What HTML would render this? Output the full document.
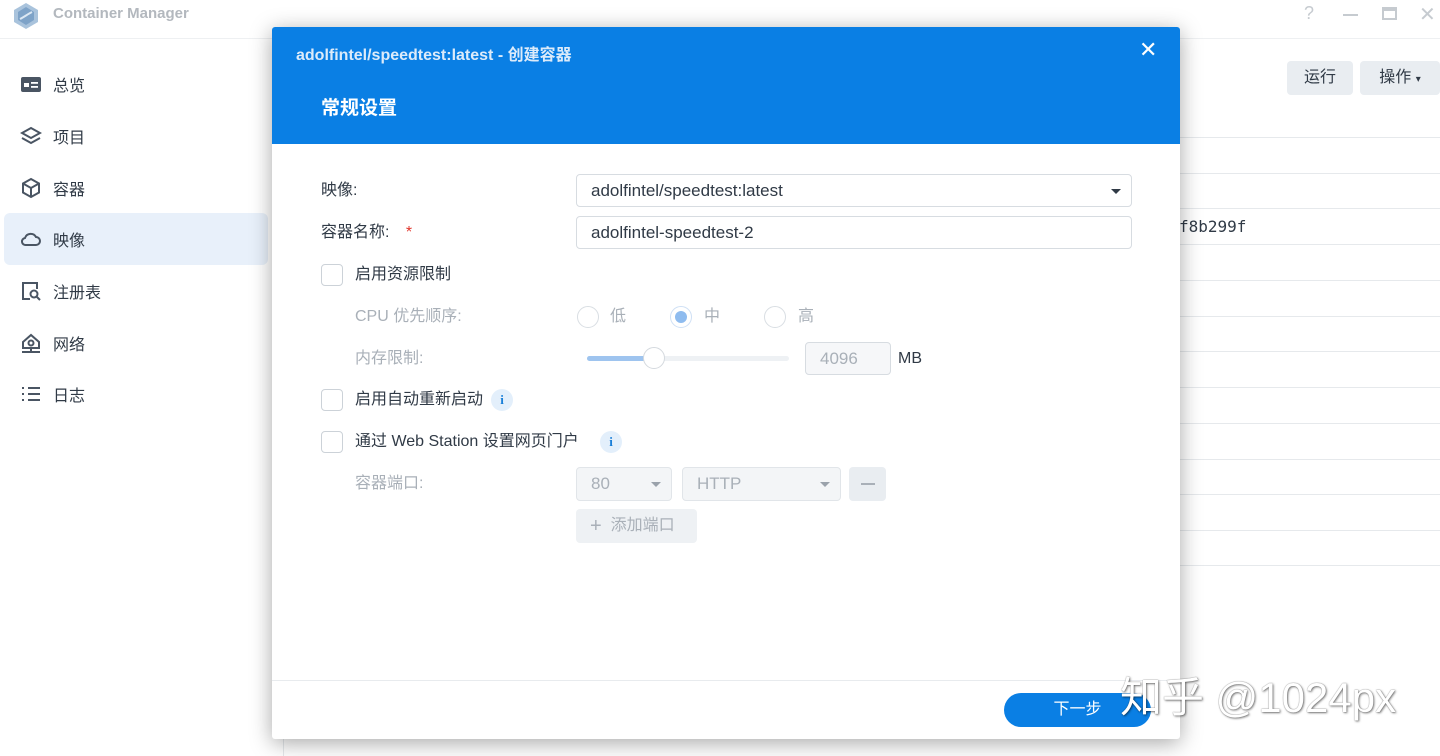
<!DOCTYPE html>
<html><head><meta charset="utf-8"><style>
*{box-sizing:border-box;margin:0;padding:0}
body{width:1440px;height:756px;overflow:hidden;background:#fff;font-family:"Liberation Sans","Noto Sans CJK SC",sans-serif;color:#303a46;position:relative}
.abs{position:absolute}
.top{left:0;top:0;width:1440px;height:39px;border-bottom:1px solid #eef0f2}
.title{left:53px;top:5px;font-size:15px;font-weight:bold;color:#b3b8be}
.nav{left:20px;font-size:16px;color:#303a46;display:flex;align-items:center}
.nav svg{width:22px;height:22px;margin-right:11px}
.sel{left:4px;top:213px;width:264px;height:52px;background:#e8f0fa;border-radius:6px}
.row{left:1180px;width:260px;height:1px;background:#e6e9ec}
.btn{top:61px;height:34px;background:#e9edf1;border-radius:4px;font-size:16px;color:#303a46;text-align:center;line-height:34px}
.modal{left:272px;top:27px;width:908px;height:712px;background:#fff;border-radius:3px;box-shadow:0 4px 22px rgba(0,0,0,.35);overflow:hidden}
.hd{left:0;top:0;width:908px;height:117px;background:#0a7fe4}
.lbl{font-size:16px;line-height:20px;color:#303a46}
.dim{color:#a9b0b8}
.inp{height:33px;border:1px solid #d7dce1;border-radius:4px;font-size:17px;line-height:31px;padding-left:14px}
.cb{width:22px;height:22px;border:1px solid #ccd2d8;border-radius:4px;background:#fff}
.radio{width:22px;height:22px;border:1px solid #d9dee3;border-radius:50%}
.info{width:22px;height:22px;border-radius:50%;background:#e3effb;color:#1a7fd8;font-size:13px;font-weight:bold;text-align:center;line-height:22px;font-family:"Liberation Serif",serif}
.sel2{height:34px;border:1px solid #e1e5e9;border-radius:4px;background:#f3f5f7;color:#a9b0b8;font-size:17px;line-height:32px;padding-left:14px}
.caret{position:absolute;right:10px;top:14px;border-left:5px solid transparent;border-right:5px solid transparent;border-top:5px solid #9aa2ab}
</style></head><body>
<div class="abs top"></div>
<svg class="abs" style="left:12px;top:2px" width="28" height="28" viewBox="0 0 28 28"><path d="M14 1L26 8V20L14 27L2 20V8Z" fill="#a9c3dc"/><path d="M14 5L22 10V18L14 23L6 18V10Z" fill="#7ea3c8"/><path d="M8 17C12 15 16 12 20 10" stroke="#dce8f3" stroke-width="2" fill="none"/></svg>
<div class="abs title">Container Manager</div>
<div class="abs" style="left:1304px;top:3px;font-size:18px;color:#c6cbd0">?</div>
<div class="abs" style="left:1343px;top:14px;width:15px;height:2px;background:#c6cbd0"></div>
<div class="abs" style="left:1382px;top:7px;width:15px;height:13px;border:2px solid #c6cbd0;border-top-width:4px"></div>
<div class="abs" style="left:1419px;top:2px;font-size:20px;color:#c6cbd0">✕</div>

<div class="abs sel"></div>
<div class="abs nav" style="top:72px"><svg viewBox="0 0 22 22"><rect x="1" y="4" width="20" height="15" rx="2" fill="#4a5563"/><rect x="4" y="10" width="5" height="4" fill="#fff"/><rect x="11" y="9" width="7" height="1.8" fill="#fff"/><rect x="11" y="13" width="7" height="1.8" fill="#fff"/></svg>总览</div>
<div class="abs nav" style="top:124px"><svg viewBox="0 0 22 22" fill="none" stroke="#4a5563" stroke-width="2"><path d="M11 3L20 8L11 13L2 8Z"/><path d="M2 13L11 18L20 13"/></svg>项目</div>
<div class="abs nav" style="top:176px"><svg viewBox="0 0 22 22" fill="none" stroke="#4a5563" stroke-width="2"><path d="M11 2L19 6.5V15.5L11 20L3 15.5V6.5Z"/><path d="M3 6.5L11 11L19 6.5M11 11V20"/></svg>容器</div>
<div class="abs nav" style="top:227px"><svg viewBox="0 0 22 22" fill="none" stroke="#4a5563" stroke-width="2"><path d="M6 17H16A4 4 0 0 0 16 9A6 6 0 0 0 5 10A3.5 3.5 0 0 0 6 17Z"/></svg>映像</div>
<div class="abs nav" style="top:279px"><svg viewBox="0 0 22 22" fill="none" stroke="#4a5563" stroke-width="2"><path d="M10 19H3V3H17V9"/><circle cx="14" cy="14" r="3.5"/><path d="M16.5 16.5L20 20"/></svg>注册表</div>
<div class="abs nav" style="top:331px"><svg viewBox="0 0 22 22" fill="none" stroke="#4a5563" stroke-width="2"><path d="M3 10L11 3L19 10V16H3Z"/><circle cx="11" cy="11" r="2.5"/><path d="M2 20H20M11 16V20"/></svg>网络</div>
<div class="abs nav" style="top:382px"><svg viewBox="0 0 22 22" stroke="#4a5563" stroke-width="2"><path d="M2 5H4M8 5H20M2 11H4M8 11H20M2 17H4M8 17H20"/></svg>日志</div>
<div class="abs" style="left:283px;top:39px;width:1px;height:717px;background:#e6e9ec"></div>

<div class="abs btn" style="left:1287px;width:66px">运行</div>
<div class="abs btn" style="left:1360px;width:80px">操作 <span style="font-size:10px">▾</span></div>
<div class="abs row" style="top:137px"></div><div class="abs row" style="top:173px"></div><div class="abs row" style="top:208px"></div><div class="abs row" style="top:244px"></div><div class="abs row" style="top:280px"></div><div class="abs row" style="top:316px"></div><div class="abs row" style="top:351px"></div><div class="abs row" style="top:387px"></div><div class="abs row" style="top:423px"></div><div class="abs row" style="top:459px"></div><div class="abs row" style="top:494px"></div><div class="abs row" style="top:530px"></div><div class="abs row" style="top:565px"></div>
<div class="abs" style="left:1179px;top:217px;font-size:16px;font-family:'DejaVu Sans Mono',monospace;color:#303a46">f8b299f</div>

<div class="abs modal">
 <div class="abs hd"></div>
 <div class="abs" style="left:24px;top:14px;font-size:16px;font-weight:bold;color:#dcebfa">adolfintel/speedtest:latest - 创建容器</div>
 <div class="abs" style="left:867px;top:10px;font-size:22px;color:#fff">✕</div>
 <div class="abs" style="left:49px;top:66px;font-size:19px;font-weight:bold;color:#fff">常规设置</div>

 <div class="abs lbl" style="left:49px;top:154px">映像:</div>
 <div class="abs inp" style="left:304px;top:147px;width:556px">adolfintel/speedtest:latest<span class="caret" style="top:14px;border-top-color:#303a46"></span></div>
 <div class="abs lbl" style="left:49px;top:196px">容器名称: <span style="color:#e0362c;margin-left:12px">*</span></div>
 <div class="abs inp" style="left:304px;top:189px;width:556px">adolfintel-speedtest-2</div>

 <div class="abs cb" style="left:49px;top:237px"></div>
 <div class="abs lbl" style="left:83px;top:238px">启用资源限制</div>
 <div class="abs lbl dim" style="left:83px;top:280px">CPU 优先顺序:</div>
 <div class="abs radio" style="left:305px;top:279px"></div><div class="abs lbl dim" style="left:338px;top:280px">低</div>
 <div class="abs radio" style="left:398px;top:279px;border-color:#cfe0f5"><div style="margin:4px;width:12px;height:12px;border-radius:50%;background:#8fbcef"></div></div><div class="abs lbl dim" style="left:432px;top:280px">中</div>
 <div class="abs radio" style="left:492px;top:279px"></div><div class="abs lbl dim" style="left:526px;top:280px">高</div>
 <div class="abs lbl dim" style="left:83px;top:322px">内存限制:</div>
 <div class="abs" style="left:315px;top:329px;width:202px;height:5px;border-radius:3px;background:#eef1f4"></div>
 <div class="abs" style="left:315px;top:329px;width:68px;height:5px;border-radius:3px;background:#9ec4ef"></div>
 <div class="abs" style="left:371px;top:320px;width:22px;height:22px;border-radius:50%;background:#fff;border:1px solid #d4d9de"></div>
 <div class="abs inp dim" style="left:533px;top:315px;width:86px;background:#f6f7f9">4096</div>
 <div class="abs lbl" style="left:626px;top:322px">MB</div>

 <div class="abs cb" style="left:49px;top:362px"></div>
 <div class="abs lbl" style="left:83px;top:363px">启用自动重新启动</div>
 <div class="abs info" style="left:219px;top:362px">i</div>
 <div class="abs cb" style="left:49px;top:404px"></div>
 <div class="abs lbl" style="left:83px;top:405px">通过 Web Station 设置网页门户</div>
 <div class="abs info" style="left:328px;top:404px">i</div>

 <div class="abs lbl dim" style="left:83px;top:447px">容器端口:</div>
 <div class="abs sel2" style="left:304px;top:440px;width:96px">80<span class="caret"></span></div>
 <div class="abs sel2" style="left:410px;top:440px;width:159px">HTTP<span class="caret"></span></div>
 <div class="abs" style="left:577px;top:440px;width:37px;height:34px;background:#e9edf1;border-radius:4px"><div style="margin:16px auto 0;width:14px;height:2px;background:#a9b0b8"></div></div>
 <div class="abs" style="left:304px;top:482px;width:121px;height:34px;background:#eef1f4;border-radius:4px;color:#a9b0b8;font-size:16px;line-height:34px;padding-left:14px"><span style="font-size:20px;vertical-align:-2px">+</span>&nbsp; 添加端口</div>

 <div class="abs" style="left:0;top:653px;width:908px;height:1px;background:#e8ebee"></div>
 <div class="abs" style="left:732px;top:666px;width:147px;height:34px;background:#0a7fe4;border-radius:17px;color:#fff;font-size:16px;text-align:center;line-height:34px">下一步</div>
</div>
<div class="abs" style="left:1120px;top:664px;font-size:42px;color:#fff;text-shadow:1px 1px 2px rgba(0,0,0,.5),0 0 1px rgba(0,0,0,.6);font-family:'Liberation Sans Narrow','Liberation Sans','Noto Sans CJK SC',sans-serif">知乎 @1024px</div>
</body></html>
